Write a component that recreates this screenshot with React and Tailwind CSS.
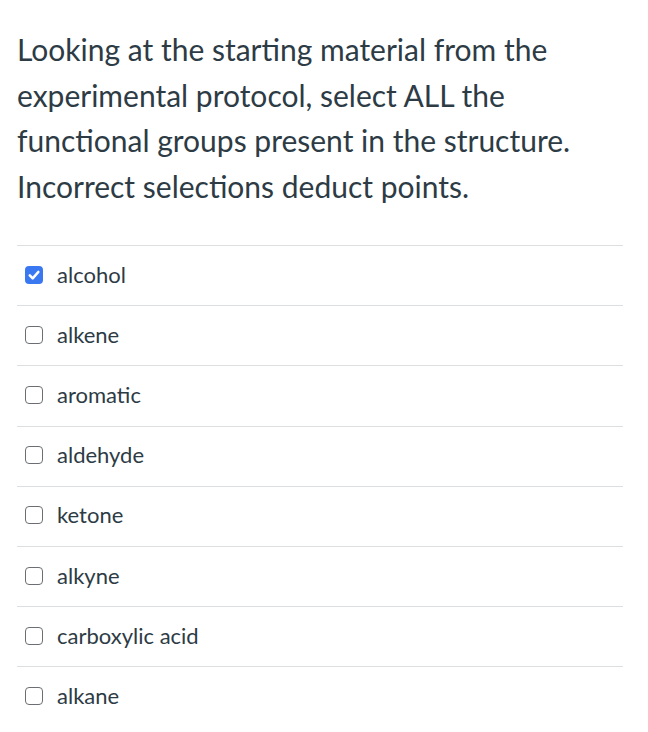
import { useState } from "react";

const options = [
  "alcohol",
  "alkene",
  "aromatic",
  "aldehyde",
  "ketone",
  "alkyne",
  "carboxylic acid",
  "alkane",
];

export default function App() {
  const [checked, setChecked] = useState({ alcohol: true });

  return (
    <div
      className="w-[648px] min-h-[732px] bg-white text-[#2d3b45]"
      style={{ fontFamily: "Lato, 'Noto Sans', sans-serif" }}
    >
      <p className="pl-[17px] pr-[30px] pt-[27px] text-[30px] leading-[45.5px]">
        Looking at the starting material from the experimental protocol, select ALL the
        functional groups present in the structure. Incorrect selections deduct points.
      </p>

      <div className="mt-[36px] ml-[17px] w-[606px]">
        {options.map((opt) => (
          <label
            key={opt}
            className="flex h-[60.2px] items-center border-t border-[#dcdfe2] pl-[8px] pb-[2px] cursor-pointer"
          >
            <span
              className={
                checked[opt]
                  ? "flex h-[18px] w-[18px] items-center justify-center rounded-[4px] bg-[#3a78f2]"
                  : "h-[18px] w-[18px] rounded-[4px] border-[1.5px] border-[#6b6f73] bg-white"
              }
              onClick={() => setChecked({ ...checked, [opt]: !checked[opt] })}
            >
              {checked[opt] && (
                <svg width="14" height="14" viewBox="0 0 14 14">
                  <path
                    d="M2.8 7.4l2.9 2.9L11.3 4"
                    fill="none"
                    stroke="white"
                    strokeWidth="2.6"
                    strokeLinecap="round"
                    strokeLinejoin="round"
                  />
                </svg>
              )}
            </span>
            <span className="ml-[14px] text-[22px] leading-none">{opt}</span>
          </label>
        ))}
      </div>
    </div>
  );
}
